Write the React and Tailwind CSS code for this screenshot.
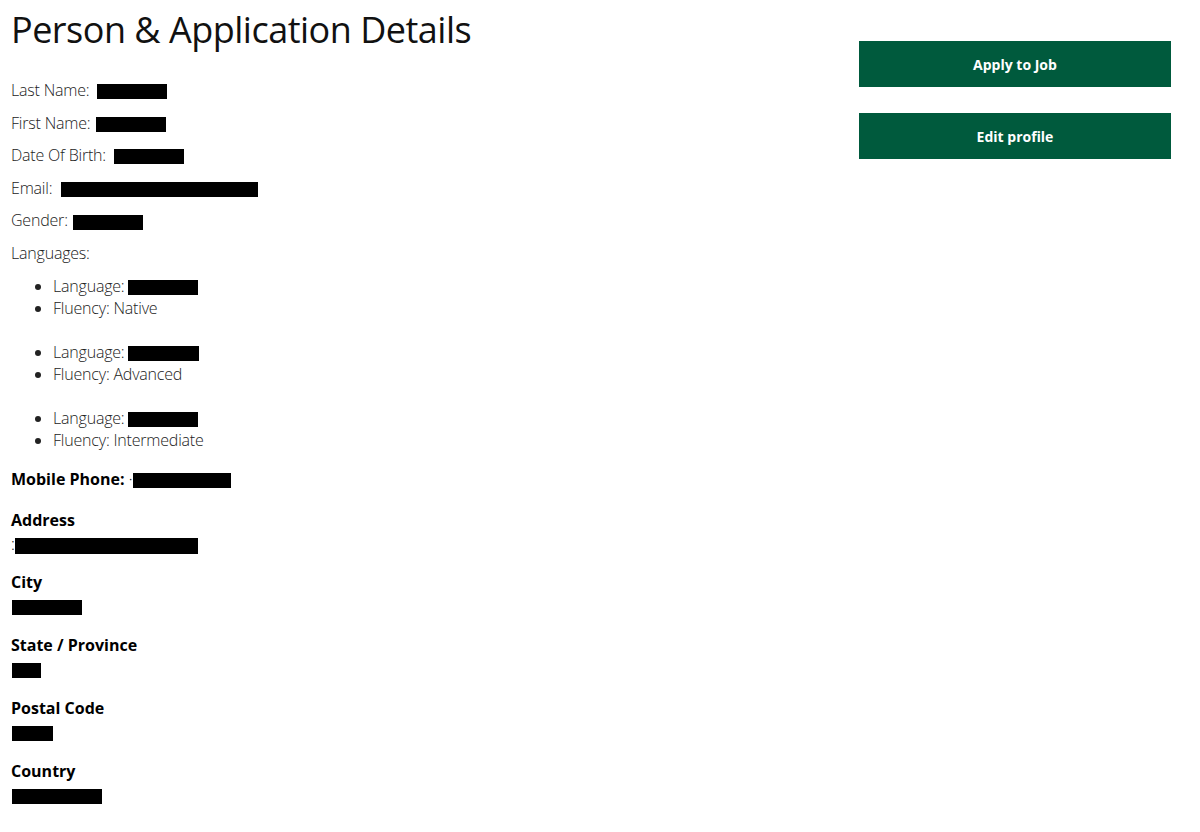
const Redact = ({ w, h = 'h-[15px]', gap = '' }) => (
  <span className={`inline-block align-middle bg-black ${w} ${h} ${gap}`} />
);

const languages = [
  { fluency: 'Native', w: 'w-[70px]' },
  { fluency: 'Advanced', w: 'w-[71px]' },
  { fluency: 'Intermediate', w: 'w-[70px]' },
];

const addressFields = [
  { label: 'City', w: 'w-[70px]' },
  { label: 'State / Province', w: 'w-[29px]' },
  { label: 'Postal Code', w: 'w-[41px]' },
  { label: 'Country', w: 'w-[90px]' },
];

export default function App() {
  return (
    <div className="min-h-[832px] bg-white text-black font-['Open_Sans',sans-serif] flex justify-between">
      {/* Left column: details */}
      <div className="pl-[11px] pt-[6px]">
        <h1 className="text-[36px] leading-[48px] font-normal tracking-[-0.5px] text-[#111]">
          Person &amp; Application Details
        </h1>

        <div className="mt-[25px] text-[16px] font-light text-[#222] flex flex-col gap-[10.6px] leading-[22px] tracking-[-0.2px]">
          <div>Last Name: <Redact w="w-[70px]" gap="ml-[4px]" /></div>
          <div>First Name: <Redact w="w-[70px]" gap="ml-[2px]" /></div>
          <div>Date Of Birth: <Redact w="w-[70px]" gap="ml-[4px]" /></div>
          <div>Email: <Redact w="w-[197px]" gap="ml-[5px]" /></div>
          <div>Gender: <Redact w="w-[70px]" gap="ml-[1px]" /></div>
          <div>Languages:</div>
        </div>

        <div className="mt-[11px] text-[16px] font-light text-[#222] leading-[22px] tracking-[-0.2px]">
          {languages.map((l, i) => (
            <ul key={i} className="list-disc pl-[42px] mb-[22px] last:mb-0">
              <li>Language: <Redact w={l.w} /></li>
              <li>Fluency: {l.fluency}</li>
            </ul>
          ))}
        </div>

        <div className="mt-[17px] text-[16px] font-bold leading-[22px]">
          Mobile Phone: <span className="font-light">·</span><Redact w="w-[98px]" gap="ml-[1px]" />
        </div>

        <div className="mt-[19px]">
          <div className="text-[16px] font-bold leading-[22px]">Address</div>
          <div className="text-[16px] leading-[22px] mt-[2px]">
            <span className="font-light">:</span><Redact w="w-[183px]" h="h-[16px]" />
          </div>
        </div>

        {addressFields.map((f, i) => (
          <div key={f.label} className={i === 0 ? 'mt-[16px]' : 'mt-[17px]'}>
            <div className="text-[16px] font-bold leading-[22px]">{f.label}</div>
            <div className="leading-[22px] mt-[2px] pl-[1px]">
              <Redact w={f.w} h="h-[15px]" />
            </div>
          </div>
        ))}
      </div>

      {/* Right column: actions */}
      <div className="w-[312px] mr-[29px] mt-[41px] flex flex-col gap-[26px]">
        <button className="h-[46px] w-full bg-[#005a3d] text-white text-[14px] font-bold">
          Apply to Job
        </button>
        <button className="h-[46px] w-full bg-[#005a3d] text-white text-[14px] font-bold">
          Edit profile
        </button>
      </div>
    </div>
  );
}
